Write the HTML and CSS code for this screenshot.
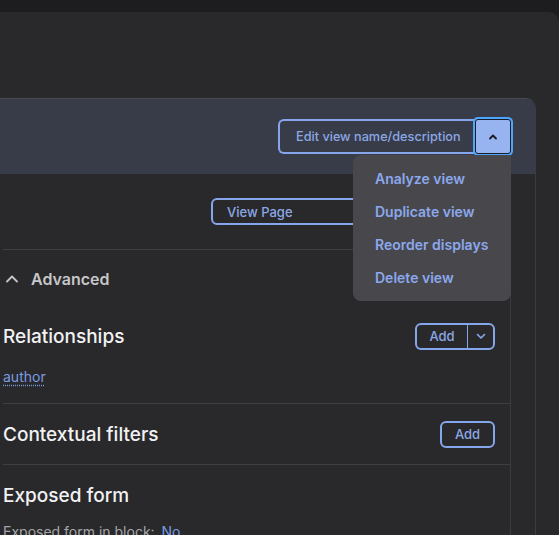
FILE: index.html
```html
<!DOCTYPE html>
<html lang="en">
<head>
    <meta charset="UTF-8">
    <title>Edit view</title>
    <link rel="stylesheet" href="styles.css">
</head>
<body>
    <div class="topbar"></div>

    <div class="panel">
        <div class="card">
            <!-- Header with the view actions -->
            <div class="card-header">
                <div class="btn-group">
                    <button class="btn btn-edit">Edit view name/description</button>
                    <button class="btn-toggle" aria-expanded="true">
                        <svg width="12" height="12" viewBox="0 0 12 12"><path d="M3 7.5L6 4.5L9 7.5" fill="none" stroke="#1b1d24" stroke-width="1.8" stroke-linecap="round" stroke-linejoin="round"/></svg>
                    </button>
                    <ul class="menu">
                        <li><a href="#">Analyze view</a></li>
                        <li><a href="#">Duplicate view</a></li>
                        <li><a href="#">Reorder displays</a></li>
                        <li><a href="#">Delete view</a></li>
                    </ul>
                </div>
            </div>

            <div class="card-body">
                <div class="column">
                    <div class="row-top">
                        <button class="btn btn-small btn-view">View Page</button>
                    </div>

                    <div class="section">
                        <div class="advanced">
                            <svg width="14" height="14" viewBox="0 0 14 14"><path d="M2 9.5L7 4.5L12 9.5" fill="none" stroke="#c6c6c8" stroke-width="1.8" stroke-linecap="round" stroke-linejoin="round"/></svg>
                            <span>Advanced</span>
                        </div>
                        <div class="section-head head-rel">
                            <h2>Relationships</h2>
                            <div class="split">
                                <button class="split-main">Add</button>
                                <button class="split-arrow">
                                    <svg width="12" height="12" viewBox="0 0 12 12"><path d="M2.5 4.5L6 8L9.5 4.5" fill="none" stroke="#8ba8ec" stroke-width="1.6" stroke-linecap="round" stroke-linejoin="round"/></svg>
                                </button>
                            </div>
                        </div>
                        <a class="link" href="#">author</a>
                    </div>

                    <div class="section">
                        <div class="section-head">
                            <h2>Contextual filters</h2>
                            <button class="btn btn-small btn-add">Add</button>
                        </div>
                    </div>

                    <div class="section last">
                        <div class="section-head">
                            <h2>Exposed form</h2>
                        </div>
                        <p class="setting">Exposed form in block: <a href="#">No</a></p>
                    </div>
                </div>
            </div>
        </div>
    </div>
</body>
</html>
```

FILE: styles.css
```css
/* Base */
body, html {
    margin: 0;
    padding: 0;
    height: 100%;
}

body {
    background: #1d1d20;
    font-family: Inter, "Noto Sans", sans-serif;
    overflow: hidden;
}

button {
    font-family: inherit;
    cursor: pointer;
}

.topbar {
    height: 12px;
}

/* Outer panel */
.panel {
    background: #29292b;
    border-top-right-radius: 10px;
    padding-top: 86px;
    height: 600px;
}

/* Card */
.card {
    margin-right: 23px;
    border-top: 1px solid #474a55;
    border-right: 1px solid #3c3c40;
    border-top-right-radius: 10px;
    height: 600px;
}

.card-header {
    background: #383c48;
    border-top-right-radius: 9px;
    height: 75px;
    display: flex;
    justify-content: flex-end;
    padding: 0 24px 0 0;
}

.btn-group {
    position: relative;
    display: flex;
    align-items: center;
    margin-top: 19px;
    height: 37px;
}

.btn {
    background: transparent;
    border: 2px solid #86a6ec;
    border-radius: 6px;
    color: #8ba8e6;
    font-size: 13px;
    font-weight: 500;
    white-space: nowrap;
}

.btn-edit {
    height: 35px;
    width: 196px;
    padding: 0 0 0 16px;
    font-size: 12.7px;
    text-align: left;
    border-radius: 6px 0 0 6px;
    border-right: none;
}

.btn-toggle {
    width: 36px;
    height: 35px;
    background: #98b4f0;
    border: 1px solid #1b1d24;
    border-radius: 3px;
    box-shadow: 0 0 0 2px #4ca6ff;
    margin-left: 1px;
    display: flex;
    align-items: center;
    justify-content: center;
    padding: 0;
}

/* Dropdown menu */
.menu {
    position: absolute;
    top: 37px;
    right: 0;
    width: 158px;
    margin: 0;
    padding: 8px 0 6px;
    list-style: none;
    background: #48474c;
    border-radius: 8px 0 8px 8px;
    z-index: 10;
    box-sizing: border-box;
}

.menu a {
    display: block;
    padding: 6px 8px 7px 22px;
    line-height: 20px;
    font-size: 14px;
    font-weight: 600;
    color: #8ba8ec;
    text-decoration: none;
    white-space: nowrap;
}

/* Body */
.card-body {
    padding-right: 24px;
}

.column {
    border-right: 1px solid #3c3c40;
    padding-left: 3px;
}

.row-top {
    height: 76px;
    border-bottom: 1px solid #3e3e42;
    padding-left: 208px;
    padding-top: 24px;
    box-sizing: border-box;
}

.btn-small {
    height: 27px;
    padding: 0 14px;
}

.btn-view {
    width: 160px;
    text-align: left;
}

.section {
    border-bottom: 1px solid #3e3e42;
    padding: 16px 15px 16px 0;
}

.section.last {
    border-bottom: none;
}

.advanced {
    display: flex;
    align-items: center;
    gap: 12px;
    margin-top: 3px;
    margin-bottom: 33px;
    height: 20px;
    padding-left: 2px;
    color: #c6c6c8;
    font-size: 16px;
    font-weight: 600;
}

.section-head {
    display: flex;
    align-items: center;
    justify-content: space-between;
    height: 28px;
}

.section-head h2 {
    margin: 0;
    font-size: 19px;
    font-weight: 500;
    color: #f2f2f4;
}

.head-rel {
    margin-bottom: 17px;
}

.split {
    display: flex;
    height: 27px;
    border: 2px solid #86a6ec;
    border-radius: 6px;
    box-sizing: border-box;
}

.split button {
    background: transparent;
    border: none;
    color: #8ba8e6;
    font-size: 13px;
    font-weight: 500;
    padding: 0;
}

.split-main {
    width: 51px;
    border-right: 1px solid #86a6ec !important;
}

.split-arrow {
    width: 25px;
    display: flex;
    align-items: center;
    justify-content: center;
}

.btn-add {
    width: 55px;
    padding: 0;
}

.link {
    display: block;
    line-height: 20px;
    font-size: 14px;
    color: #7b9ce0;
    text-decoration: underline dotted;
    text-underline-offset: 3px;
    width: max-content;
}

.setting {
    margin: 13px 0 0;
    line-height: 20px;
    font-size: 14px;
    color: #a6a6aa;
}

.setting a {
    color: #7b9ce0;
    text-decoration: none;
    margin-left: 3px;
}
```
